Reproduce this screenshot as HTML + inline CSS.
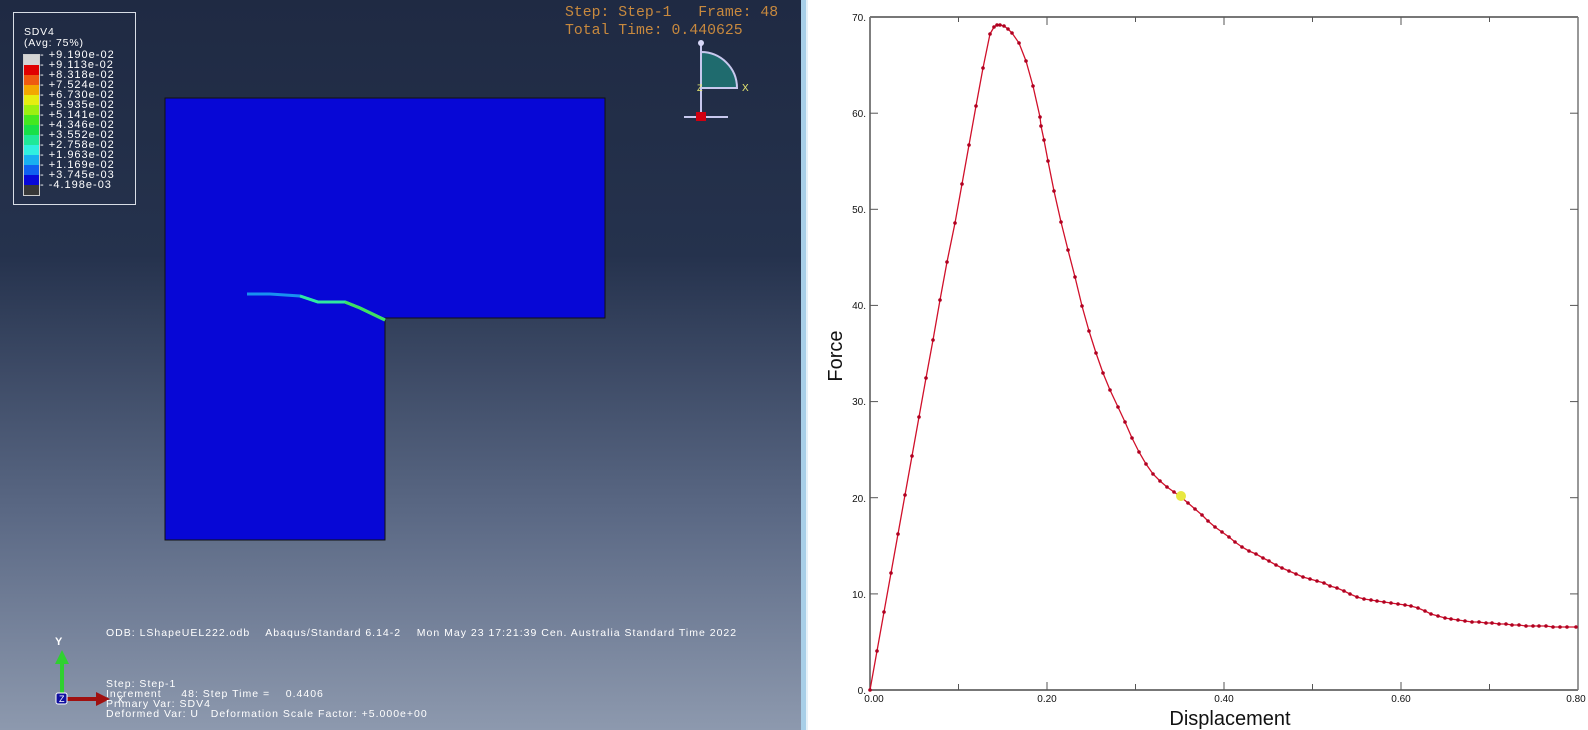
<!DOCTYPE html>
<html><head><meta charset="utf-8"><style>
html,body{margin:0;padding:0;width:1588px;height:730px;overflow:hidden;background:#fff}
.l{position:absolute;left:0;top:0;width:801px;height:730px;background:linear-gradient(#1f2a43 0%,#25324d 35%,#5a6884 70%,#8d99ae 100%)}
.t{position:absolute;font-family:"Liberation Sans",sans-serif;color:#fff;font-size:10.5px;line-height:10px;white-space:pre;letter-spacing:1px}
.o{position:absolute;font-family:"Liberation Mono",monospace;color:#c8893e;font-size:14.8px;white-space:pre}
</style></head><body>
<div class="l"></div>
<div style="position:absolute;left:801px;top:0;width:5px;height:730px;background:#a8cfe8"></div>
<div style="position:absolute;left:806px;top:0;width:2px;height:730px;background:#e6f1f8"></div>
<div style="position:absolute;left:13px;top:12px;width:121px;height:191px;border:1px solid #d8dde6"></div>
<div class="t" style="left:24px;top:27px;letter-spacing:0.8px">SDV4</div>
<div class="t" style="left:24px;top:38px;letter-spacing:0.8px">(Avg: 75%)</div>
<div style="position:absolute;left:23px;top:54px;width:15px;height:140px;border:1px solid #ccc">
<div style="height:10px;background:#d4d4d4"></div><div style="height:10px;background:#e00000"></div><div style="height:10px;background:#ee5a10"></div><div style="height:10px;background:#f2a800"></div><div style="height:10px;background:#e6ee10"></div><div style="height:10px;background:#9cf010"></div><div style="height:10px;background:#44e820"></div><div style="height:10px;background:#18e048"></div><div style="height:10px;background:#20e898"></div><div style="height:10px;background:#30f0e0"></div><div style="height:10px;background:#18b0f0"></div><div style="height:10px;background:#1060f0"></div><div style="height:10px;background:#0808d8"></div><div style="height:10px;background:#383838"></div></div>
<div class="t" style="left:40px;top:50px;line-height:10px;font-size:11px;letter-spacing:1px">- +9.190e-02
- +9.113e-02
- +8.318e-02
- +7.524e-02
- +6.730e-02
- +5.935e-02
- +5.141e-02
- +4.346e-02
- +3.552e-02
- +2.758e-02
- +1.963e-02
- +1.169e-02
- +3.745e-03
- -4.198e-03</div>
<div class="o" style="left:565px;top:5px">Step: Step-1   Frame: 48</div>
<div class="o" style="left:565px;top:23px">Total Time: 0.440625</div>
<svg style="position:absolute;left:0;top:0" width="801" height="730">
<polygon points="165,98 605,98 605,318 385,318 385,540 165,540" fill="#0707d6" stroke="#111" stroke-width="1"/>
<polyline points="247,294 270,294 300,296 318,302 345,302 360,308 385,320" fill="none" stroke="#1890f0" stroke-width="3"/>
<polyline points="300,296 318,302 345,302 360,308 385,320" fill="none" stroke="#30e8a0" stroke-width="3"/>
<polyline points="345,302 360,308 385,320" fill="none" stroke="#40e060" stroke-width="3"/>
<path d="M701,52 A36,36 0 0 1 737,88 L701,88Z" fill="#1f6b6e" stroke="#c8c8ee" stroke-width="2"/>
<line x1="701" y1="43" x2="701" y2="117" stroke="#c8c8ee" stroke-width="2"/>
<line x1="684" y1="117" x2="728" y2="117" stroke="#c8c8ee" stroke-width="2"/>
<circle cx="701" cy="43" r="3" fill="#d8d8f8"/>
<rect x="696" y="112" width="10" height="9" fill="#d00010"/>
<text x="742" y="91" fill="#e8e870" font-family="Liberation Sans" font-size="10">X</text>
<text x="697" y="91" fill="#e8e870" font-family="Liberation Sans" font-size="9">Z</text>
<line x1="62" y1="695" x2="62" y2="660" stroke="#30d030" stroke-width="4"/>
<polygon points="55,664 62,650 69,664" fill="#30d030"/>
<line x1="62" y1="699" x2="98" y2="699" stroke="#a01010" stroke-width="4"/>
<polygon points="96,692 110,699 96,706" fill="#a01010"/>
<rect x="56" y="693" width="11" height="11" rx="2" fill="#1010a0" stroke="#fff" stroke-width="1"/>
<text x="59" y="702" fill="#fff" font-family="Liberation Sans" font-size="9">Z</text>
<text x="55" y="645" fill="#fff" font-family="Liberation Sans" font-size="11" font-weight="bold">Y</text>
<text x="117" y="703" fill="#fff" font-family="Liberation Sans" font-size="10">X</text>
</svg>
<div class="t" style="left:106px;top:628px">ODB: LShapeUEL222.odb    Abaqus/Standard 6.14-2    Mon May 23 17:21:39 Cen. Australia Standard Time 2022</div>
<div class="t" style="left:106px;top:679px">Step: Step-1
Increment     48: Step Time =    0.4406
Primary Var: SDV4
Deformed Var: U   Deformation Scale Factor: +5.000e+00</div>
<svg style="position:absolute;left:0;top:0" width="1588" height="730" font-family="Liberation Sans">
<defs><marker id="d" markerWidth="4" markerHeight="4" refX="2" refY="2" markerUnits="userSpaceOnUse"><circle cx="2" cy="2" r="1.8" fill="#b00020"/></marker></defs>
<line x1="870" y1="17" x2="870" y2="690" stroke="#555" stroke-width="1.5"/>
<line x1="870" y1="17" x2="1578" y2="17" stroke="#777" stroke-width="2"/>
<line x1="870" y1="690" x2="1578" y2="690" stroke="#777" stroke-width="2"/>
<line x1="1578" y1="17" x2="1578" y2="690" stroke="#777" stroke-width="1.5"/>
<g stroke="#555">
<line x1="870" y1="113.2" x2="878" y2="113.2"/><line x1="870" y1="209.3" x2="878" y2="209.3"/><line x1="870" y1="305.4" x2="878" y2="305.4"/><line x1="870" y1="401.6" x2="878" y2="401.6"/><line x1="870" y1="497.7" x2="878" y2="497.7"/><line x1="870" y1="593.9" x2="878" y2="593.9"/>
<line x1="1570" y1="113.2" x2="1578" y2="113.2"/><line x1="1570" y1="209.3" x2="1578" y2="209.3"/><line x1="1570" y1="305.4" x2="1578" y2="305.4"/><line x1="1570" y1="401.6" x2="1578" y2="401.6"/><line x1="1570" y1="497.7" x2="1578" y2="497.7"/><line x1="1570" y1="593.9" x2="1578" y2="593.9"/>
<line x1="958.5" y1="684" x2="958.5" y2="690"/><line x1="1047" y1="682" x2="1047" y2="690"/><line x1="1135.5" y1="684" x2="1135.5" y2="690"/><line x1="1224" y1="682" x2="1224" y2="690"/><line x1="1312.5" y1="684" x2="1312.5" y2="690"/><line x1="1401" y1="682" x2="1401" y2="690"/><line x1="1489.5" y1="684" x2="1489.5" y2="690"/>
<line x1="958.5" y1="17" x2="958.5" y2="22"/><line x1="1047" y1="17" x2="1047" y2="25"/><line x1="1135.5" y1="17" x2="1135.5" y2="22"/><line x1="1224" y1="17" x2="1224" y2="25"/><line x1="1312.5" y1="17" x2="1312.5" y2="22"/><line x1="1401" y1="17" x2="1401" y2="25"/><line x1="1489.5" y1="17" x2="1489.5" y2="22"/>
</g>
<g font-size="10" fill="#111" text-anchor="end">
<text x="866" y="21">70.</text><text x="866" y="117">60.</text><text x="866" y="213">50.</text><text x="866" y="309">40.</text><text x="866" y="405">30.</text><text x="866" y="502">20.</text><text x="866" y="598">10.</text><text x="866" y="694">0.</text>
</g>
<g font-size="10" fill="#111" text-anchor="middle">
<text x="874" y="702">0.00</text><text x="1047" y="702">0.20</text><text x="1224" y="702">0.40</text><text x="1401" y="702">0.60</text><text x="1576" y="702">0.80</text>
</g>
<text x="1230" y="725" font-size="20" text-anchor="middle" fill="#111">Displacement</text>
<text transform="translate(842,356) rotate(-90)" font-size="20" text-anchor="middle" fill="#111">Force</text>
<polyline fill="none" stroke="#d0102a" stroke-width="1.3" marker-start="url(#d)" marker-mid="url(#d)" marker-end="url(#d)" points="870,690 877,651 884,612 891,573 898,534 905,495 912,456 919,417 926,378 933,340 940,300 947,262 955,223 962,184 969,145 976,106 983,68 990,34 994,27 997,25 1000,25 1004,26 1008,29 1012,33 1019,43 1026,61 1033,86 1040,117 1041,126 1044,140 1048,161 1054,191 1061,222 1068,250 1075,277 1082,306 1089,331 1096,353 1103,373 1110,390 1118,407 1125,422 1132,438 1139,452 1146,464 1153,474 1160,481 1167,487 1174,492 1181,497 1188,503 1195,509 1202,515 1208,521 1215,527 1222,532 1229,537 1235,542 1242,547 1249,551 1256,554 1263,558 1269,561 1276,565 1282,568 1289,571 1296,574 1303,577 1310,579 1317,581 1324,583 1330,586 1337,588 1344,591 1350,594 1357,597 1364,599 1371,600 1377,601 1384,602 1391,603 1398,604 1405,605 1411,606 1418,608 1425,611 1431,614 1438,616 1445,618 1451,619 1458,620 1465,621 1472,622 1479,622 1486,623 1492,623 1499,624 1506,624 1512,625 1519,625 1526,626 1533,626 1539,626 1546,626 1553,627 1560,627 1567,627 1576,627"/>
<circle cx="1181" cy="496" r="5" fill="#e8e840"/>
</svg>
</body></html>
